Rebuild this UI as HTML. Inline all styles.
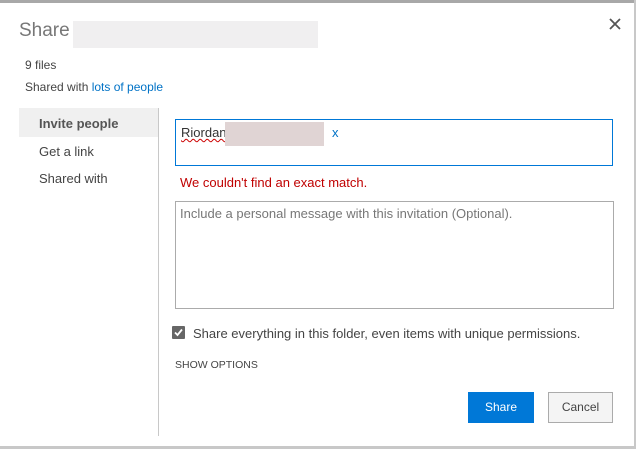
<!DOCTYPE html>
<html><head><style>
body{margin:0;width:636px;height:449px;background:#fff;position:relative;overflow:hidden;font-family:"Liberation Sans",sans-serif;color:#444}
.a{position:absolute;white-space:nowrap}
</style></head><body>
<div class="a" style="left:0;top:0;width:636px;height:3px;background:#a8a8a8"></div>
<div class="a" style="left:634px;top:0;width:2px;height:449px;background:#c8c8c8"></div>
<div class="a" style="left:0;top:446px;width:636px;height:3px;background:#c8c8c8"></div>
<div class="a" style="left:19px;top:20px;font-size:19px;color:#777">Share '</div>
<div class="a" style="left:73px;top:21px;width:245px;height:27px;background:#f0eff0"></div>
<svg class="a" style="left:609px;top:18px" width="12" height="12"><path d="M1 1L11 11M11 1L1 11" stroke="#555" stroke-width="1.8"/></svg>
<div class="a" style="left:25px;top:58px;font-size:12px">9 files</div>
<div class="a" style="left:25px;top:80px;font-size:12px">Shared with <span style="color:#0072c6">lots of people</span></div>
<div class="a" style="left:19px;top:108px;width:139px;height:29px;background:#f0f0f0"></div>
<div class="a" style="left:158px;top:108px;width:1px;height:328px;background:#c8c8c8"></div>
<div class="a" style="left:39px;top:116px;font-size:13px;font-weight:bold;color:#555">Invite people</div>
<div class="a" style="left:39px;top:144px;font-size:13px">Get a link</div>
<div class="a" style="left:39px;top:171px;font-size:13px">Shared with</div>
<div class="a" style="left:175px;top:119px;width:436px;height:45px;border:1px solid #0078d7"></div>
<div class="a" style="left:181px;top:125px;font-size:13px;color:#333;text-decoration:underline wavy #c00;text-decoration-thickness:1px">Riordan</div>
<div class="a" style="left:225px;top:122px;width:99px;height:24px;background:#e0d4d4"></div>
<div class="a" style="left:332px;top:125px;font-size:13px;color:#0072c6">x</div>
<div class="a" style="left:180px;top:175px;font-size:13px;color:#c00000">We couldn't find an exact match.</div>
<div class="a" style="left:175px;top:201px;width:437px;height:106px;border:1px solid #ababab"></div>
<div class="a" style="left:180px;top:206px;font-size:13px;color:#777">Include a personal message with this invitation (Optional).</div>
<div class="a" style="left:172px;top:326px;width:13px;height:13px;background:#666;border-radius:1px"></div>
<svg class="a" style="left:172px;top:326px" width="13" height="13"><path d="M3 6.5L5.5 9L10 3.5" stroke="#fff" stroke-width="1.8" fill="none"/></svg>
<div class="a" style="left:193px;top:326px;font-size:13px">Share everything in this folder, even items with unique permissions.</div>
<div class="a" style="left:175px;top:359px;font-size:10.5px;color:#444">SHOW OPTIONS</div>
<div class="a" style="left:468px;top:392px;width:66px;height:31px;background:#0078d7;color:#fff;font-size:12px;text-align:center;line-height:31px">Share</div>
<div class="a" style="left:548px;top:392px;width:63px;height:29px;border:1px solid #ababab;background:#f4f4f4;color:#444;font-size:12px;text-align:center;line-height:29px">Cancel</div>
</body></html>
